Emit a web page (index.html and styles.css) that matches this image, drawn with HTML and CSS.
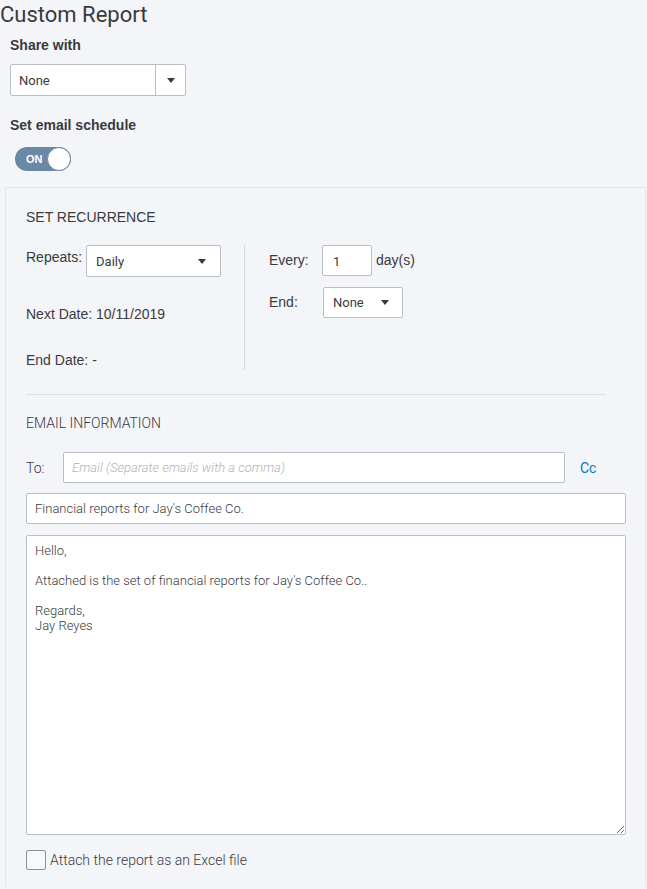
FILE: index.html
```html
<!DOCTYPE html>
<html lang="en">
<head>
    <meta charset="UTF-8">
    <meta name="viewport" content="width=device-width, initial-scale=1.0">
    <title>Custom Report</title>
    <link rel="stylesheet" href="styles.css">
</head>
<body>
    <div class="page">
        <h1 class="title">Custom Report</h1>

        <div class="settings">
            <div class="field-label">Share with</div>
            <div class="select share-select">
                <span class="select-value">None</span>
                <span class="select-btn"><span class="caret"></span></span>
            </div>

            <div class="field-label schedule-label">Set email schedule</div>
            <div class="toggle">
                <span class="toggle-text">ON</span>
                <span class="toggle-knob"></span>
            </div>
        </div>

        <div class="panel">
            <div class="section-title">SET RECURRENCE</div>

            <div class="recurrence">
                <div class="rec-left">
                    <div class="rec-row">
                        <span class="rec-label">Repeats:</span>
                        <div class="select daily-select">
                            <span class="select-value">Daily</span>
                            <span class="caret"></span>
                        </div>
                    </div>
                    <div class="rec-info">Next Date: 10/11/2019</div>
                    <div class="rec-info">End Date: -</div>
                </div>
                <div class="rec-right">
                    <span class="rec-label">Every:</span>
                    <div class="every">
                        <div class="text-box">1</div>
                        <span class="rec-label">day(s)</span>
                    </div>
                    <span class="rec-label">End:</span>
                    <div class="select end-select">
                        <span class="select-value">None</span>
                        <span class="caret"></span>
                    </div>
                </div>
            </div>

            <div class="divider"></div>

            <div class="section-title email-title">EMAIL INFORMATION</div>

            <div class="to-row">
                <span class="to-label">To:</span>
                <input class="input to-input" type="text" placeholder="Email (Separate emails with a comma)">
                <a class="cc" href="#">Cc</a>
            </div>

            <input class="input subject" type="text" value="Financial reports for Jay's Coffee Co.">

            <textarea class="message">Hello,

Attached is the set of financial reports for Jay's Coffee Co..

Regards,
Jay Reyes</textarea>

            <label class="attach">
                <span class="checkbox"></span>
                Attach the report as an Excel file
            </label>
        </div>
    </div>
</body>
</html>
```

FILE: styles.css
```css
body {
    margin: 0;
    padding: 0;
    background: #f4f5f8;
    color: #393a3d;
    font-family: "Liberation Sans", Arial, sans-serif;
}

.title {
    margin: 0;
    font-family: Roboto, "Noto Sans", sans-serif;
    font-size: 22px;
    font-weight: 400;
    line-height: 30px;
    color: #393a3d;
}

.settings {
    padding-left: 10px;
}

.field-label {
    margin-top: 7px;
    font-size: 14px;
    font-weight: bold;
    line-height: 17px;
}

.schedule-label {
    margin-top: 21px;
}

/* selects */
.select {
    display: flex;
    align-items: center;
    box-sizing: border-box;
    background: #fff;
    border: 1px solid #babec5;
    border-radius: 2px;
    font-family: Roboto, "Noto Sans", sans-serif;
    font-size: 13px;
    color: #393a3d;
}

.select-value {
    flex: 1;
}

.caret {
    width: 0;
    height: 0;
    border-left: 4px solid transparent;
    border-right: 4px solid transparent;
    border-top: 5px solid #393a3d;
}

.share-select {
    margin-top: 10px;
    width: 176px;
    height: 32px;
    padding-left: 8px;
}

.share-select .select-btn {
    display: flex;
    align-items: center;
    justify-content: center;
    width: 29px;
    height: 100%;
    border-left: 1px solid #babec5;
}

.toggle {
    display: flex;
    align-items: center;
    justify-content: space-between;
    width: 56px;
    height: 24px;
    margin: 13px 0 0 5px;
    background: #6b88a5;
    border-radius: 12px;
}

.toggle-text {
    padding-left: 11px;
    font-size: 11px;
    font-weight: bold;
    color: #fff;
}

.toggle-knob {
    box-sizing: border-box;
    width: 24px;
    height: 24px;
    background: #fff;
    border: 1px solid #6b88a5;
    border-radius: 50%;
}

/* panel */
.panel {
    margin: 16px 1px 0 5px;
    padding: 21px 19px 16px 20px;
    border: 1px solid #e1e6ee;
    border-bottom: none;
}

.section-title {
    font-size: 14px;
    line-height: 17px;
}

.recurrence {
    display: flex;
    margin-top: 19px;
}

.rec-left {
    width: 218px;
    padding-bottom: 1px;
    border-right: 1px solid #d6d9de;
}

.rec-row {
    display: flex;
    align-items: flex-start;
}

.rec-label {
    font-size: 14px;
    line-height: 17px;
}

.rec-row .rec-label {
    padding-top: 4px;
    margin-right: 4px;
}

.daily-select {
    width: 135px;
    height: 32px;
    padding: 0 14px 0 9px;
}

.rec-info {
    margin-top: 29px;
    font-size: 14px;
    line-height: 17px;
}

.rec-right {
    display: grid;
    grid-template-columns: 53px auto;
    align-items: center;
    align-content: start;
    row-gap: 11px;
    padding-left: 24px;
}

.every {
    display: flex;
    align-items: center;
    gap: 4px;
}

.text-box {
    box-sizing: border-box;
    width: 50px;
    height: 31px;
    padding: 8px 10px 0;
    background: #fff;
    border: 1px solid #babec5;
    border-radius: 2px;
    font-family: Roboto, "Noto Sans", sans-serif;
    font-size: 13px;
}

.end-select {
    width: 80px;
    height: 31px;
    margin-left: 1px;
    padding: 0 13px 0 9px;
}

.divider {
    height: 1px;
    margin: 24px 20px 0 0;
    background: #dcdfe3;
}

.email-title {
    margin-top: 20px;
    font-family: Roboto, "Noto Sans", sans-serif;
    font-weight: 300;
}

/* email */
.to-row {
    display: flex;
    align-items: center;
    margin-top: 20px;
}

.to-label {
    width: 37px;
    font-family: Roboto, "Noto Sans", sans-serif;
    font-size: 14px;
    font-weight: 300;
}

.input {
    display: block;
    box-sizing: border-box;
    height: 31px;
    margin: 0;
    padding: 0 8px;
    background: #fff;
    border: 1px solid #babec5;
    border-radius: 2px;
    font-family: Roboto, "Noto Sans", sans-serif;
    font-size: 13px;
    font-weight: 300;
    color: #393a3d;
    outline: none;
}

.to-input {
    flex: 1;
    min-width: 0;
}

.to-input::placeholder {
    font-style: italic;
    color: #b0b3b9;
}

.cc {
    width: 46px;
    margin-left: 15px;
    font-family: Roboto, "Noto Sans", sans-serif;
    font-size: 14px;
    color: #0077c5;
    text-decoration: none;
}

.subject {
    width: 100%;
    margin-top: 10px;
}

.message {
    display: block;
    box-sizing: border-box;
    width: 100%;
    height: 300px;
    margin-top: 11px;
    padding: 7px 8px;
    background: #fff;
    border: 1px solid #babec5;
    border-radius: 2px;
    font-family: Roboto, "Noto Sans", sans-serif;
    font-size: 13px;
    font-weight: 300;
    line-height: 15px;
    color: #393a3d;
    resize: vertical;
    outline: none;
}

.attach {
    display: flex;
    align-items: center;
    gap: 4px;
    margin-top: 15px;
    font-family: Roboto, "Noto Sans", sans-serif;
    font-size: 14px;
    font-weight: 300;
}

.checkbox {
    box-sizing: border-box;
    width: 20px;
    height: 20px;
    background: #f7f8fa;
    border: 1px solid #8d9096;
    border-radius: 2px;
}
```
